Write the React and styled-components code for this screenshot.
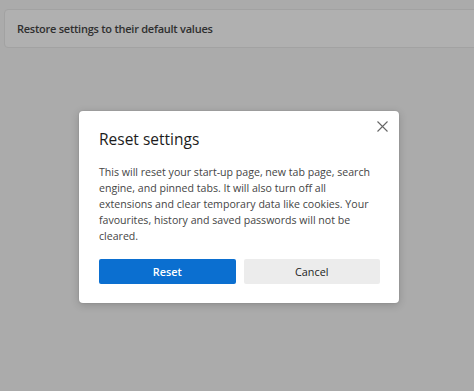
import React from "react";
import styled, { createGlobalStyle } from "styled-components";

const Global = createGlobalStyle`
  html, body { margin: 0; padding: 0; }
  body {
    background: #ababab;
    font-family: "Open Sans", "Noto Sans", sans-serif;
    width: 474px;
    height: 391px;
    overflow: hidden;
  }
`;

const Page = styled.div`
  height: 391px;
  padding: 9px 0 0 4px;
  box-sizing: border-box;
  position: relative;
`;

const SettingsCard = styled.div`
  height: 39px;
  margin-right: -20px;
  box-sizing: border-box;
  background: #b0b0b0;
  border: 1px solid #a2a2a2;
  border-radius: 4px;
  display: flex;
  align-items: center;
  padding-left: 12px;
  font-size: 11px;
  letter-spacing: -0.25px;
  color: #2f2f2f;
  font-weight: 600;
`;

const Overlay = styled.div`
  position: absolute;
  inset: 0;
  display: flex;
  justify-content: flex-start;
  align-items: flex-start;
  padding: 111px 0 0 79px;
`;

const Dialog = styled.div`
  position: relative;
  width: 320px;
  height: 192px;
  box-sizing: border-box;
  background: #ffffff;
  border-radius: 4px;
  box-shadow: 0 2px 8px rgba(0, 0, 0, 0.18), 0 0 2px rgba(0, 0, 0, 0.12);
  padding: 18px 19px 0 20px;
  display: flex;
  flex-direction: column;
`;

const CloseButton = styled.button`
  position: absolute;
  top: 10px;
  right: 11px;
  width: 11px;
  height: 11px;
  padding: 0;
  border: none;
  background: transparent;
  display: flex;
  align-items: center;
  justify-content: center;
`;

const Title = styled.h2`
  margin: 0;
  font-size: 15.5px;
  font-weight: 400;
  color: #1c1c1c;
  line-height: 20px;
`;

const Body = styled.p`
  margin: 15px 0 0;
  font-size: 10.6px;
  line-height: 16px;
  color: #454545;
  white-space: nowrap;
`;

const Actions = styled.div`
  display: grid;
  grid-template-columns: 1fr 1fr;
  gap: 8px;
  margin-top: 15px;
`;

const Button = styled.button`
  height: 25px;
  border-radius: 2px;
  border: none;
  font-family: inherit;
  font-size: 10.8px;
  padding: 0;
  background: ${(p) => (p.$primary ? "#0b6fd0" : "#ececec")};
  color: ${(p) => (p.$primary ? "#ffffff" : "#222222")};
  font-weight: ${(p) => (p.$primary ? 600 : 400)};
`;

export default function App() {
  return (
    <>
      <Global />
      <Page>
        <SettingsCard>Restore settings to their default values</SettingsCard>
        <Overlay>
          <Dialog role="dialog">
            <CloseButton aria-label="Close">
              <svg width="11" height="11" viewBox="0 0 11 11">
                <path d="M0.5 0.5L10.5 10.5M10.5 0.5L0.5 10.5" stroke="#666" strokeWidth="1.1" />
              </svg>
            </CloseButton>
            <Title>Reset settings</Title>
            <Body>
              This will reset your start-up page, new tab page, search
              <br />
              engine, and pinned tabs. It will also turn off all
              <br />
              extensions and clear temporary data like cookies. Your
              <br />
              favourites, history and saved passwords will not be
              <br />
              cleared.
            </Body>
            <Actions>
              <Button $primary>Reset</Button>
              <Button>Cancel</Button>
            </Actions>
          </Dialog>
        </Overlay>
      </Page>
    </>
  );
}
